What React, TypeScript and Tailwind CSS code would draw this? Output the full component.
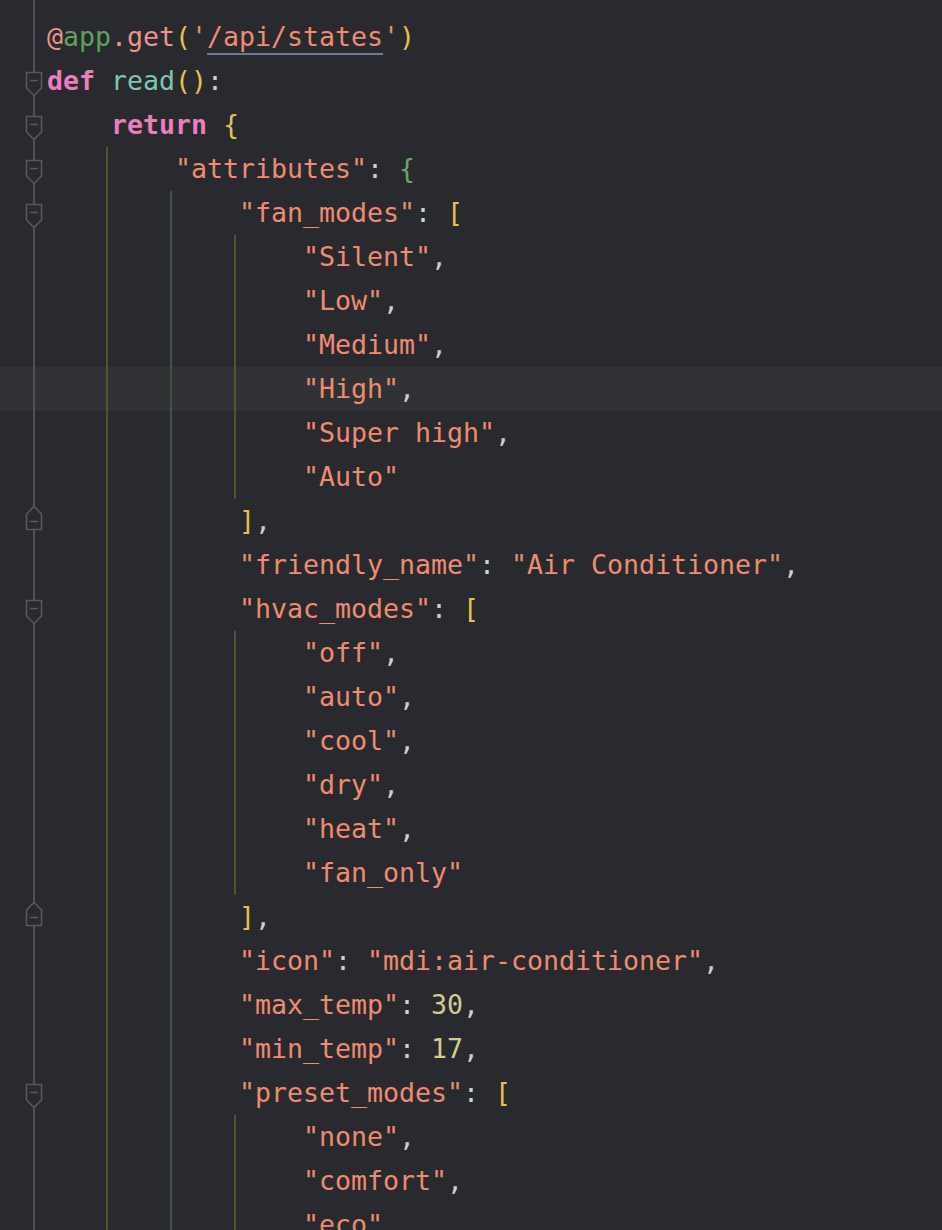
type Tok = [string, string?];

const S = "text-[#ef8b6f]";
const K = "text-[#e97fbb] font-bold";
const F = "text-[#80c5b4]";
const P = "text-[#cdcfd2]";
const Y = "text-[#e6c04c]";
const G = "text-[#6aa861]";
const N = "text-[#d5cb8f]";
const AT = "text-[#e8968a]";
const APP = "text-[#62a05e]";
const URL = "text-[#ef8b6f] underline decoration-[#6e7b98] decoration-[length:1.5px] underline-offset-[7px]";

type Line = { depth: number; toks: Tok[]; fold?: "down" | "up" };

const item = (v: string, last = false): Line => ({
    depth: 4,
    toks: last ? [[`"${v}"`, S]] : [[`"${v}"`, S], [",", P]],
});

const lines: Line[] = [
    { depth: 0, toks: [["@", AT], ["app", APP], [".get", AT], ["(", Y], ["'", S], ["/api/states", URL], ["'", S], [")", Y]] },
    { depth: 0, fold: "down", toks: [["def", K], [" "], ["read", F], ["()", Y], [":", P]] },
    { depth: 1, fold: "down", toks: [["return", K], [" "], ["{", Y]] },
    { depth: 2, fold: "down", toks: [['"attributes"', S], [":", P], [" "], ["{", G]] },
    { depth: 3, fold: "down", toks: [['"fan_modes"', S], [":", P], [" "], ["[", Y]] },
    item("Silent"),
    item("Low"),
    item("Medium"),
    item("High"),
    item("Super high"),
    item("Auto", true),
    { depth: 3, fold: "up", toks: [["]", Y], [",", P]] },
    { depth: 3, toks: [['"friendly_name"', S], [":", P], [" "], ['"Air Conditioner"', S], [",", P]] },
    { depth: 3, fold: "down", toks: [['"hvac_modes"', S], [":", P], [" "], ["[", Y]] },
    item("off"),
    item("auto"),
    item("cool"),
    item("dry"),
    item("heat"),
    item("fan_only", true),
    { depth: 3, fold: "up", toks: [["]", Y], [",", P]] },
    { depth: 3, toks: [['"icon"', S], [":", P], [" "], ['"mdi:air-conditioner"', S], [",", P]] },
    { depth: 3, toks: [['"max_temp"', S], [":", P], [" "], ["30", N], [",", P]] },
    { depth: 3, toks: [['"min_temp"', S], [":", P], [" "], ["17", N], [",", P]] },
    { depth: 3, fold: "down", toks: [['"preset_modes"', S], [":", P], [" "], ["[", Y]] },
    item("none"),
    item("comfort"),
    item("eco"),
];

// gutter: the fold line with its markers
function Gutter({ fold, h = 44 }: { fold?: "down" | "up"; h?: number }) {
    return (
        <svg width="47" height={h} viewBox={`0 0 47 ${h}`} className="shrink-0">
            <path d={`M34 0 V${h}`} stroke="#4f5155" strokeWidth="2" />
            {fold === "down" && (
                <>
                    <path d="M26.5 13.5 H41.5 V29 L34 36.5 L26.5 29 Z" fill="#292a2f" stroke="#56585c" strokeWidth="1.6" />
                    <path d="M30 21.5 H38" stroke="#56585c" strokeWidth="1.6" />
                </>
            )}
            {fold === "up" && (
                <>
                    <path d="M34 7.5 L41.5 15 V30.5 H26.5 V15 Z" fill="#292a2f" stroke="#56585c" strokeWidth="1.6" />
                    <path d="M30 22.5 H38" stroke="#56585c" strokeWidth="1.6" />
                </>
            )}
        </svg>
    );
}

// indentation with rainbow guides, one column of 4 spaces per depth
function Indent({ depth }: { depth: number }) {
    if (depth === 0) return null;
    if (depth === 1) return <div className="w-[64px] shrink-0" />;
    const guides = ["border-[#5a4f30]", "border-[#3e5542]", "border-[#5a4f30]"];
    return (
        <>
            <div className="w-[59px] shrink-0" />
            {guides.slice(0, depth - 1).map((g, i) => (
                <div key={i} className={`shrink-0 border-l-2 ${g} ${i === depth - 2 ? "w-[69px]" : "w-[64px]"}`} />
            ))}
        </>
    );
}

function CodeLine({ line, active }: { line: Line; active: boolean }) {
    return (
        <div className={`flex h-[44px] ${active ? "bg-[#313236]" : ""}`}>
            <Gutter fold={line.fold} />
            <Indent depth={line.depth} />
            <pre className="font-['DejaVu_Sans_Mono',monospace] text-[26.58px] leading-[44px] whitespace-pre">
                {line.toks.map(([t, c], i) => (
                    <span key={i} className={c ?? ""}>
                        {t}
                    </span>
                ))}
            </pre>
        </div>
    );
}

export default function App() {
    return (
        <div className="flex h-[1230px] w-[942px] flex-col overflow-hidden bg-[#292a2f]">
            <div className="flex shrink-0">
                <Gutter h={15} />
            </div>
            {lines.map((line, i) => (
                <CodeLine key={i} line={line} active={i === 8} />
            ))}
        </div>
    );
}
